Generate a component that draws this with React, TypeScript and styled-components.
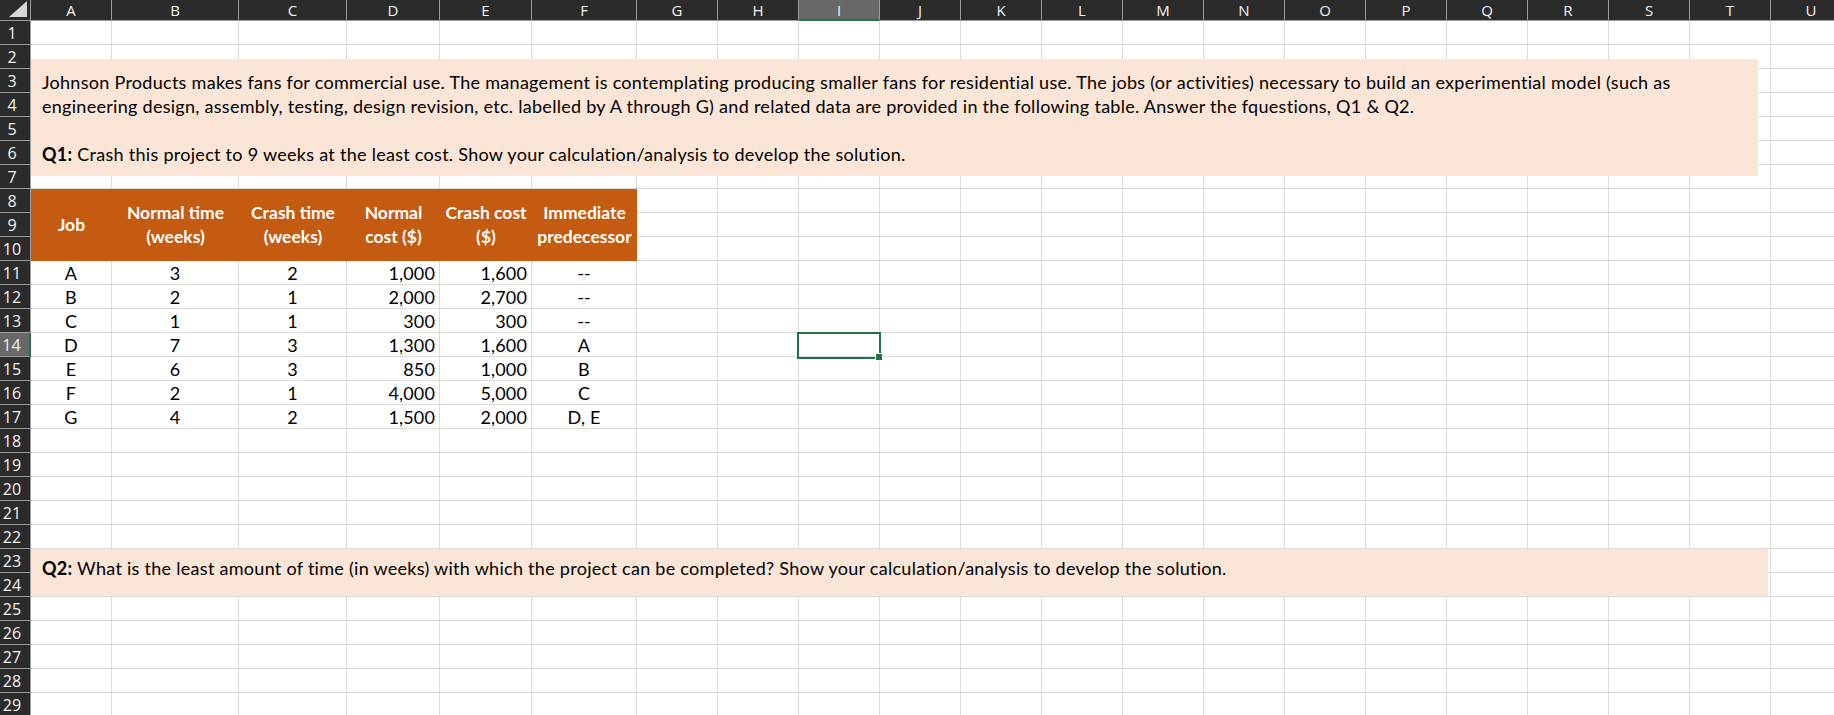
import React from "react";
import styled, { createGlobalStyle, css } from "styled-components";

const colWidths = [81, 127, 108, 93, 92, 105, 81, 81, 81, 81, 81, 81, 81, 81, 81, 81, 81, 81, 81, 81, 81];
const letters = "ABCDEFGHIJKLMNOPQRSTU".split("");
const ROWS = 29;
const SEL_COL = "I";
const SEL_ROW = 14;

const headers = [
  ["Job"],
  ["Normal time", "(weeks)"],
  ["Crash time", "(weeks)"],
  ["Normal", "cost ($)"],
  ["Crash cost", "($)"],
  ["Immediate", "predecessor"],
];

const jobs = [
  ["A", "3", "2", "1,000", "1,600", "--"],
  ["B", "2", "1", "2,000", "2,700", "--"],
  ["C", "1", "1", "300", "300", "--"],
  ["D", "7", "3", "1,300", "1,600", "A"],
  ["E", "6", "3", "850", "1,000", "B"],
  ["F", "2", "1", "4,000", "5,000", "C"],
  ["G", "4", "2", "1,500", "2,000", "D, E"],
];
const align: ("center" | "right")[] = ["center", "center", "center", "right", "right", "center"];

const GlobalStyle = createGlobalStyle`
  html, body {
    margin: 0;
    padding: 0;
    background: #ffffff;
    overflow: hidden;
  }
`;

const Sheet = styled.div`
  position: relative;
  display: grid;
  grid-template-columns: 31px ${colWidths.map((w) => `${w}px`).join(" ")};
  grid-template-rows: 21px repeat(${ROWS}, 24px);
  width: 1834px;
  height: 715px;
  overflow: hidden;
  font-family: Lato, "Open Sans", sans-serif;
  font-size: 18px;
  letter-spacing: 0.15px;
  color: #000;
`;

const Corner = styled.div`
  background: #2b2b2b;
  border-right: 1px solid #9c9c9c;
  border-bottom: 1px solid #9c9c9c;
  box-sizing: border-box;
  display: flex;
  align-items: flex-end;
  justify-content: flex-end;
  padding: 0 3px 3px 0;
`;

const headBase = css<{ $sel?: boolean }>`
  background: ${(p) => (p.$sel ? "#686868" : "#2b2b2b")};
  color: #f2f2f2;
  font-family: "Open Sans", "Noto Sans", sans-serif;
  letter-spacing: 0;
  display: flex;
  align-items: center;
  justify-content: center;
  box-sizing: border-box;
`;

const ColHead = styled.div<{ $sel?: boolean }>`
  ${headBase};
  font-size: 15px;
  border-right: 1px solid #9c9c9c;
  border-bottom: ${(p) => (p.$sel ? "2px solid #217346" : "1px solid #9c9c9c")};
  padding-top: ${(p) => (p.$sel ? "1px" : "0")};
`;

const RowHead = styled.div<{ $sel?: boolean }>`
  ${headBase};
  font-size: 16px;
  padding-right: 6px;
  border-right: ${(p) => (p.$sel ? "2px solid #217346" : "1px solid #9c9c9c")};
  border-bottom: 1px solid #9c9c9c;
`;

const Cell = styled.div<{ $align?: "center" | "right" | "left" }>`
  box-sizing: border-box;
  border-right: 1px solid #dadada;
  border-bottom: 1px solid #dadada;
  display: flex;
  align-items: center;
  white-space: nowrap;
  padding: 1px 4px 0 4px;
  justify-content: ${(p) =>
    p.$align === "right" ? "flex-end" : p.$align === "center" ? "center" : "flex-start"};
`;

const HeadCell = styled.div`
  grid-row: span 3;
  background: #c55a11;
  color: #ffffff;
  font-weight: 700;
  font-size: 17.5px;
  display: flex;
  flex-direction: column;
  align-items: center;
  justify-content: center;
  line-height: 24px;
  white-space: nowrap;
  text-align: center;
  letter-spacing: 0;
`;

const noteBox = css`
  position: absolute;
  left: 31px;
  background: #fbe5d6;
  box-sizing: border-box;
  padding-left: 11px;
  line-height: 24px;
  white-space: nowrap;
  letter-spacing: 0.28px;
`;

const IntroNote = styled.div`
  ${noteBox};
  top: 59px;
  width: 1727px;
  height: 117px;
  padding-top: 11px;
`;

const QuestionNote = styled.div`
  ${noteBox};
  top: 549px;
  width: 1737px;
  height: 47px;
  padding-top: 7px;
`;

const Gap = styled.div`
  height: 24px;
`;

const Selection = styled.div`
  position: absolute;
  left: 797px;
  top: 332px;
  width: 84px;
  height: 27px;
  box-sizing: border-box;
  border: 2px solid #217346;
  pointer-events: none;
`;

const FillHandle = styled.div`
  position: absolute;
  right: -4px;
  bottom: -4px;
  width: 6px;
  height: 6px;
  background: #217346;
  border: 1px solid #ffffff;
`;

function SheetRow({ r }: { r: number }) {
  const inHeader = r >= 8 && r <= 10;
  const job = r >= 11 && r <= 17 ? jobs[r - 11] : null;
  return (
    <>
      <RowHead $sel={r === SEL_ROW}>{r}</RowHead>
      {r === 8 &&
        headers.map((lines, i) => (
          <HeadCell key={`h${i}`}>
            {lines.map((t) => (
              <span key={t}>{t}</span>
            ))}
          </HeadCell>
        ))}
      {letters.map((l, c) => {
        if (inHeader && c < 6) return null;
        const value = job && c < 6 ? job[c] : null;
        return (
          <Cell key={l} $align={value ? align[c] : "left"}>
            {value}
          </Cell>
        );
      })}
    </>
  );
}

export default function App() {
  const rows = Array.from({ length: ROWS }, (_, i) => i + 1);
  return (
    <>
      <GlobalStyle />
      <Sheet>
        <Corner>
          <svg width="18" height="16" viewBox="0 0 18 16">
            <polygon points="18,0 18,16 0,16" fill="#d6d6d6" />
          </svg>
        </Corner>
        {letters.map((l) => (
          <ColHead key={l} $sel={l === SEL_COL}>
            {l}
          </ColHead>
        ))}
        {rows.map((r) => (
          <SheetRow key={r} r={r} />
        ))}
        <IntroNote>
          Johnson Products makes fans for commercial use. The management is contemplating producing smaller fans
          for residential use. The jobs (or activities) necessary to build an experimential model (such as
          <br />
          engineering design, assembly, testing, design revision, etc. labelled by A through G) and related data
          are provided in the following table. Answer the fquestions, Q1 &amp; Q2.
          <Gap />
          <b>Q1:</b> Crash this project to 9 weeks at the least cost. Show your calculation/analysis to develop the
          solution.
        </IntroNote>
        <QuestionNote>
          <b>Q2:</b> What is the least amount of time (in weeks) with which the project can be completed? Show your
          calculation/analysis to develop the solution.
        </QuestionNote>
        <Selection>
          <FillHandle />
        </Selection>
      </Sheet>
    </>
  );
}
